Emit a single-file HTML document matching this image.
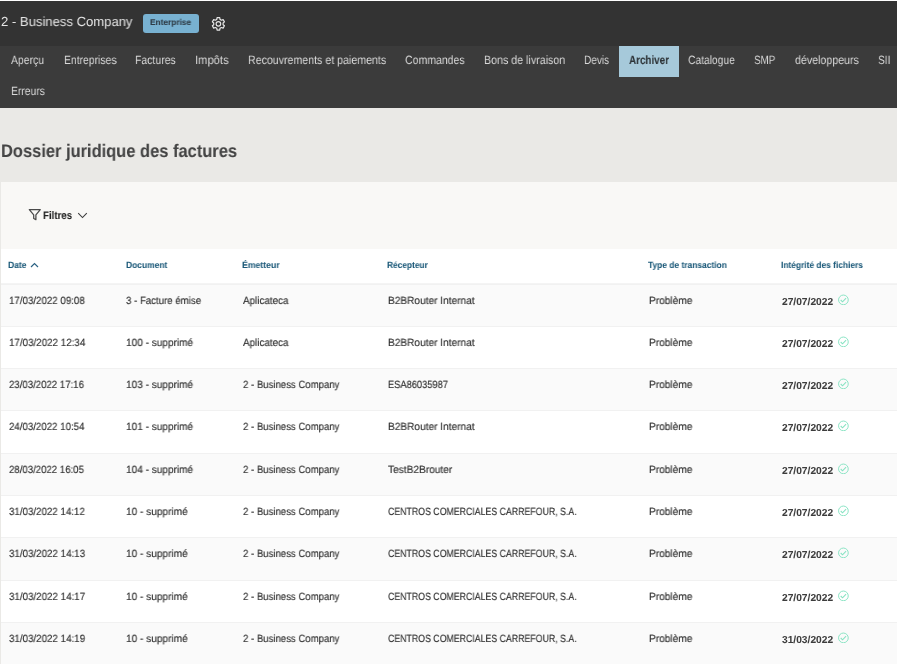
<!DOCTYPE html>
<html><head><meta charset="utf-8"><style>
html,body{margin:0;padding:0;}
body{width:897px;height:664px;position:relative;overflow:hidden;background:#eae9e6;font-family:"Liberation Sans", sans-serif;}
.t{position:absolute;white-space:nowrap;transform-origin:0 0;text-rendering:geometricPrecision;will-change:transform;-webkit-text-stroke:0.16px currentColor;}
.r{position:absolute;left:1px;right:0;}
.ck{position:absolute;}
#top{position:absolute;left:0;top:0;width:897px;height:46px;background:#333333;border-top:1px solid #ffffff;box-sizing:border-box;}
#nav{position:absolute;left:0;top:46px;width:897px;height:62px;background:#3b3b3b;}
#badge{position:absolute;left:143px;top:14px;width:56px;height:19px;background:#78b1d1;border-radius:3px;}
#act{position:absolute;left:619px;top:46px;width:60px;height:31px;background:#a6c9da;}
#ph{position:absolute;left:0;top:108px;width:897px;height:74px;background:#eae9e6;}
#fp{position:absolute;left:1px;top:182px;right:0;height:67px;background:#f9f8f6;}
#th{position:absolute;left:1px;top:249px;right:0;height:34px;background:#ffffff;}
#thb{position:absolute;left:1px;top:283px;right:0;height:1px;background:#efefef;}
</style></head><body>
<div id="top"></div>
<div id="nav"></div>
<div id="badge"></div>
<div id="act"></div>
<div id="ph"></div>
<div id="fp"></div>
<div id="th"></div>

<div class="r" style="top:284px;height:1px;background:#f1f1f1"></div><div class="r" style="top:285px;height:41px;background:#fafafa"></div><div class="r" style="top:326px;height:1px;background:#f1f1f1"></div><div class="r" style="top:327px;height:41px;background:#ffffff"></div><div class="r" style="top:368px;height:1px;background:#f1f1f1"></div><div class="r" style="top:369px;height:41px;background:#fafafa"></div><div class="r" style="top:410px;height:1px;background:#f1f1f1"></div><div class="r" style="top:411px;height:42px;background:#ffffff"></div><div class="r" style="top:453px;height:1px;background:#f1f1f1"></div><div class="r" style="top:454px;height:41px;background:#fafafa"></div><div class="r" style="top:495px;height:1px;background:#f1f1f1"></div><div class="r" style="top:496px;height:41px;background:#ffffff"></div><div class="r" style="top:537px;height:1px;background:#f1f1f1"></div><div class="r" style="top:538px;height:42px;background:#fafafa"></div><div class="r" style="top:580px;height:1px;background:#f1f1f1"></div><div class="r" style="top:581px;height:41px;background:#ffffff"></div><div class="r" style="top:622px;height:1px;background:#f1f1f1"></div><div class="r" style="top:623px;height:41px;background:#fafafa"></div><div class="r" style="top:283px;height:1px;background:#f4f4f4"></div>
<svg style="position:absolute;left:210px;top:16px" width="16" height="16" viewBox="0 0 16 16"><g transform="translate(0.4,-0.15)"><path d="M6.38 3.54 L6.68 1.79 L9.32 1.79 L9.62 3.54 L11.05 4.36 L12.72 3.75 L14.04 6.04 L12.68 7.18 L12.68 8.82 L14.04 9.96 L12.72 12.25 L11.05 11.64 L9.62 12.46 L9.32 14.21 L6.68 14.21 L6.38 12.46 L4.95 11.64 L3.28 12.25 L1.96 9.96 L3.32 8.82 L3.32 7.18 L1.96 6.04 L3.28 3.75 L4.95 4.36Z" fill="none" stroke="#e6e6e6" stroke-width="1.2" stroke-linejoin="round"/><circle cx="8" cy="8" r="2.3" fill="none" stroke="#e6e6e6" stroke-width="1.15"/></g></svg>
<svg style="position:absolute;left:24px;top:204px" width="20" height="20" viewBox="0 0 20 20"><g transform="translate(4.2,4.05) scale(0.55)"><polygon points="22 3 2 3 10 12.46 10 19 14 21 14 12.46 22 3" fill="none" stroke="#4a4a4a" stroke-width="2.3" stroke-linejoin="round" stroke-linecap="round"/></g></svg>
<svg style="position:absolute;left:77px;top:211px" width="11" height="9" viewBox="0 0 11 9"><path d="M1.2 2.2 L5.5 6.5 L9.8 2.2" fill="none" stroke="#3a3a3a" stroke-width="1.05"/></svg>
<svg style="position:absolute;left:30px;top:262px" width="9" height="6" viewBox="0 0 9 6"><path d="M1 5 L4.5 1.5 L8 5" fill="none" stroke="#2b6283" stroke-width="1.2"/></svg>
<svg class="ck" style="left:837px;top:293px" width="13" height="12" viewBox="0 0 13 12"><g transform="translate(6.4,6.90)"><circle cx="0" cy="0" r="4.85" fill="none" stroke="#86e3c2" stroke-width="0.95"/><path d="M-2.7 0.1 L-0.85 1.9 L2.7 -1.8" fill="none" stroke="#86e3c2" stroke-width="1.05"/></g></svg><svg class="ck" style="left:837px;top:335px" width="13" height="12" viewBox="0 0 13 12"><g transform="translate(6.4,6.90)"><circle cx="0" cy="0" r="4.85" fill="none" stroke="#86e3c2" stroke-width="0.95"/><path d="M-2.7 0.1 L-0.85 1.9 L2.7 -1.8" fill="none" stroke="#86e3c2" stroke-width="1.05"/></g></svg><svg class="ck" style="left:837px;top:377px" width="13" height="12" viewBox="0 0 13 12"><g transform="translate(6.4,6.90)"><circle cx="0" cy="0" r="4.85" fill="none" stroke="#86e3c2" stroke-width="0.95"/><path d="M-2.7 0.1 L-0.85 1.9 L2.7 -1.8" fill="none" stroke="#86e3c2" stroke-width="1.05"/></g></svg><svg class="ck" style="left:837px;top:419px" width="13" height="12" viewBox="0 0 13 12"><g transform="translate(6.4,6.90)"><circle cx="0" cy="0" r="4.85" fill="none" stroke="#86e3c2" stroke-width="0.95"/><path d="M-2.7 0.1 L-0.85 1.9 L2.7 -1.8" fill="none" stroke="#86e3c2" stroke-width="1.05"/></g></svg><svg class="ck" style="left:837px;top:462px" width="13" height="12" viewBox="0 0 13 12"><g transform="translate(6.4,6.90)"><circle cx="0" cy="0" r="4.85" fill="none" stroke="#86e3c2" stroke-width="0.95"/><path d="M-2.7 0.1 L-0.85 1.9 L2.7 -1.8" fill="none" stroke="#86e3c2" stroke-width="1.05"/></g></svg><svg class="ck" style="left:837px;top:504px" width="13" height="12" viewBox="0 0 13 12"><g transform="translate(6.4,6.90)"><circle cx="0" cy="0" r="4.85" fill="none" stroke="#86e3c2" stroke-width="0.95"/><path d="M-2.7 0.1 L-0.85 1.9 L2.7 -1.8" fill="none" stroke="#86e3c2" stroke-width="1.05"/></g></svg><svg class="ck" style="left:837px;top:546px" width="13" height="12" viewBox="0 0 13 12"><g transform="translate(6.4,6.90)"><circle cx="0" cy="0" r="4.85" fill="none" stroke="#86e3c2" stroke-width="0.95"/><path d="M-2.7 0.1 L-0.85 1.9 L2.7 -1.8" fill="none" stroke="#86e3c2" stroke-width="1.05"/></g></svg><svg class="ck" style="left:837px;top:589px" width="13" height="12" viewBox="0 0 13 12"><g transform="translate(6.4,6.90)"><circle cx="0" cy="0" r="4.85" fill="none" stroke="#86e3c2" stroke-width="0.95"/><path d="M-2.7 0.1 L-0.85 1.9 L2.7 -1.8" fill="none" stroke="#86e3c2" stroke-width="1.05"/></g></svg><svg class="ck" style="left:837px;top:631px" width="13" height="12" viewBox="0 0 13 12"><g transform="translate(6.4,6.90)"><circle cx="0" cy="0" r="4.85" fill="none" stroke="#86e3c2" stroke-width="0.95"/><path d="M-2.7 0.1 L-0.85 1.9 L2.7 -1.8" fill="none" stroke="#86e3c2" stroke-width="1.05"/></g></svg>
<div class="t" style="left:0.51px;top:15px;font-size:13.23px;line-height:13.23px;font-weight:400;color:#e6e6e6;transform:scaleX(0.9887);-webkit-text-stroke:0">2 - Business Company</div><div class="t" style="left:150.02px;top:18px;font-size:8.43px;line-height:8.43px;font-weight:700;color:#2e3a44;transform:scaleX(0.9847);-webkit-text-stroke:0.06px currentColor">Enterprise</div><div class="t" style="left:11.40px;top:54px;font-size:12.06px;line-height:12.06px;font-weight:400;color:#d8d8d8;transform:scaleX(0.8645);-webkit-text-stroke:0">Aperçu</div><div class="t" style="left:63.80px;top:54px;font-size:12.06px;line-height:12.06px;font-weight:400;color:#d8d8d8;transform:scaleX(0.8620);-webkit-text-stroke:0">Entreprises</div><div class="t" style="left:135.19px;top:54px;font-size:12.06px;line-height:12.06px;font-weight:400;color:#d8d8d8;transform:scaleX(0.8686);-webkit-text-stroke:0">Factures</div><div class="t" style="left:195.39px;top:54px;font-size:12.06px;line-height:12.06px;font-weight:400;color:#d8d8d8;transform:scaleX(0.9295);-webkit-text-stroke:0">Impôts</div><div class="t" style="left:247.97px;top:54px;font-size:12.06px;line-height:12.06px;font-weight:400;color:#d8d8d8;transform:scaleX(0.8818);-webkit-text-stroke:0">Recouvrements et paiements</div><div class="t" style="left:405.20px;top:54px;font-size:12.06px;line-height:12.06px;font-weight:400;color:#d8d8d8;transform:scaleX(0.8733);-webkit-text-stroke:0">Commandes</div><div class="t" style="left:483.67px;top:54px;font-size:12.06px;line-height:12.06px;font-weight:400;color:#d8d8d8;transform:scaleX(0.8853);-webkit-text-stroke:0">Bons de livraison</div><div class="t" style="left:583.61px;top:54px;font-size:12.06px;line-height:12.06px;font-weight:400;color:#d8d8d8;transform:scaleX(0.8356);-webkit-text-stroke:0">Devis</div><div class="t" style="left:687.92px;top:54px;font-size:12.06px;line-height:12.06px;font-weight:400;color:#d8d8d8;transform:scaleX(0.8535);-webkit-text-stroke:0">Catalogue</div><div class="t" style="left:753.86px;top:54px;font-size:12.06px;line-height:12.06px;font-weight:400;color:#d8d8d8;transform:scaleX(0.8174);-webkit-text-stroke:0">SMP</div><div class="t" style="left:795.00px;top:54px;font-size:12.06px;line-height:12.06px;font-weight:400;color:#d8d8d8;transform:scaleX(0.8832);-webkit-text-stroke:0">développeurs</div><div class="t" style="left:877.75px;top:54px;font-size:12.06px;line-height:12.06px;font-weight:400;color:#d8d8d8;transform:scaleX(0.8369);-webkit-text-stroke:0">SII</div><div class="t" style="left:628.80px;top:54px;font-size:12.06px;line-height:12.06px;font-weight:700;color:#2e3438;transform:scaleX(0.8175);-webkit-text-stroke:0.06px currentColor">Archiver</div><div class="t" style="left:10.60px;top:85px;font-size:12.06px;line-height:12.06px;font-weight:400;color:#d8d8d8;transform:scaleX(0.8573);-webkit-text-stroke:0">Erreurs</div><div class="t" style="left:1.07px;top:142px;font-size:18.17px;line-height:18.17px;font-weight:700;color:#444;transform:scaleX(0.9066);-webkit-text-stroke:0.06px currentColor">Dossier juridique des factures</div><div class="t" style="left:42.84px;top:211px;font-size:11.05px;line-height:11.05px;font-weight:700;color:#222;transform:scaleX(0.8785);-webkit-text-stroke:0.06px currentColor">Filtres</div><div class="t" style="left:7.79px;top:261px;font-size:9.01px;line-height:9.01px;font-weight:700;color:#1a5878;transform:scaleX(0.9474);-webkit-text-stroke:0.06px currentColor">Date</div><div class="t" style="left:126.19px;top:261px;font-size:9.01px;line-height:9.01px;font-weight:700;color:#1a5878;transform:scaleX(0.9388);-webkit-text-stroke:0.06px currentColor">Document</div><div class="t" style="left:241.89px;top:261px;font-size:9.01px;line-height:9.01px;font-weight:700;color:#1a5878;transform:scaleX(0.9642);-webkit-text-stroke:0.06px currentColor">Émetteur</div><div class="t" style="left:386.90px;top:261px;font-size:9.01px;line-height:9.01px;font-weight:700;color:#1a5878;transform:scaleX(0.9278);-webkit-text-stroke:0.06px currentColor">Récepteur</div><div class="t" style="left:648.10px;top:261px;font-size:9.01px;line-height:9.01px;font-weight:700;color:#1a5878;transform:scaleX(0.9357);-webkit-text-stroke:0.06px currentColor">Type de transaction</div><div class="t" style="left:780.69px;top:261px;font-size:9.01px;line-height:9.01px;font-weight:700;color:#1a5878;transform:scaleX(0.9312);-webkit-text-stroke:0.06px currentColor">Intégrité des fichiers</div><div class="t" style="left:8.50px;top:297px;font-size:10.47px;line-height:10.47px;font-weight:400;color:#333333;transform:scaleX(0.9293)">17/03/2022 09:08</div><div class="t" style="left:126.19px;top:297px;font-size:10.47px;line-height:10.47px;font-weight:400;color:#333333;transform:scaleX(0.9210)">3 - Facture émise</div><div class="t" style="left:243.40px;top:297px;font-size:10.47px;line-height:10.47px;font-weight:400;color:#333333;transform:scaleX(0.9416)">Aplicateca</div><div class="t" style="left:387.51px;top:297px;font-size:10.47px;line-height:10.47px;font-weight:400;color:#333333;transform:scaleX(0.9663)">B2BRouter Internat</div><div class="t" style="left:648.81px;top:297px;font-size:10.47px;line-height:10.47px;font-weight:400;color:#333333;transform:scaleX(0.9685)">Problème</div><div class="t" style="left:782.00px;top:298px;font-size:10.17px;line-height:10.17px;font-weight:700;color:#3c3c3c;transform:scaleX(1.0054);-webkit-text-stroke:0.06px currentColor">27/07/2022</div><div class="t" style="left:8.50px;top:339px;font-size:10.47px;line-height:10.47px;font-weight:400;color:#333333;transform:scaleX(0.9358)">17/03/2022 12:34</div><div class="t" style="left:125.97px;top:339px;font-size:10.47px;line-height:10.47px;font-weight:400;color:#333333;transform:scaleX(0.9602)">100 - supprimé</div><div class="t" style="left:243.40px;top:339px;font-size:10.47px;line-height:10.47px;font-weight:400;color:#333333;transform:scaleX(0.9416)">Aplicateca</div><div class="t" style="left:387.51px;top:339px;font-size:10.47px;line-height:10.47px;font-weight:400;color:#333333;transform:scaleX(0.9663)">B2BRouter Internat</div><div class="t" style="left:648.81px;top:339px;font-size:10.47px;line-height:10.47px;font-weight:400;color:#333333;transform:scaleX(0.9685)">Problème</div><div class="t" style="left:782.00px;top:340px;font-size:10.17px;line-height:10.17px;font-weight:700;color:#3c3c3c;transform:scaleX(1.0054);-webkit-text-stroke:0.06px currentColor">27/07/2022</div><div class="t" style="left:9.30px;top:381px;font-size:10.47px;line-height:10.47px;font-weight:400;color:#333333;transform:scaleX(0.9192)">23/03/2022 17:16</div><div class="t" style="left:125.97px;top:381px;font-size:10.47px;line-height:10.47px;font-weight:400;color:#333333;transform:scaleX(0.9602)">103 - supprimé</div><div class="t" style="left:243.40px;top:381px;font-size:10.47px;line-height:10.47px;font-weight:400;color:#333333;transform:scaleX(0.9156)">2 - Business Company</div><div class="t" style="left:387.54px;top:381px;font-size:10.47px;line-height:10.47px;font-weight:400;color:#333333;transform:scaleX(0.8875)">ESA86035987</div><div class="t" style="left:648.81px;top:381px;font-size:10.47px;line-height:10.47px;font-weight:400;color:#333333;transform:scaleX(0.9685)">Problème</div><div class="t" style="left:782.00px;top:382px;font-size:10.17px;line-height:10.17px;font-weight:700;color:#3c3c3c;transform:scaleX(1.0054);-webkit-text-stroke:0.06px currentColor">27/07/2022</div><div class="t" style="left:9.30px;top:423px;font-size:10.47px;line-height:10.47px;font-weight:400;color:#333333;transform:scaleX(0.9256)">24/03/2022 10:54</div><div class="t" style="left:125.97px;top:423px;font-size:10.47px;line-height:10.47px;font-weight:400;color:#333333;transform:scaleX(0.9602)">101 - supprimé</div><div class="t" style="left:243.40px;top:423px;font-size:10.47px;line-height:10.47px;font-weight:400;color:#333333;transform:scaleX(0.9156)">2 - Business Company</div><div class="t" style="left:387.51px;top:423px;font-size:10.47px;line-height:10.47px;font-weight:400;color:#333333;transform:scaleX(0.9663)">B2BRouter Internat</div><div class="t" style="left:648.81px;top:423px;font-size:10.47px;line-height:10.47px;font-weight:400;color:#333333;transform:scaleX(0.9685)">Problème</div><div class="t" style="left:782.00px;top:424px;font-size:10.17px;line-height:10.17px;font-weight:700;color:#3c3c3c;transform:scaleX(1.0054);-webkit-text-stroke:0.06px currentColor">27/07/2022</div><div class="t" style="left:9.30px;top:466px;font-size:10.47px;line-height:10.47px;font-weight:400;color:#333333;transform:scaleX(0.9189)">28/03/2022 16:05</div><div class="t" style="left:125.97px;top:466px;font-size:10.47px;line-height:10.47px;font-weight:400;color:#333333;transform:scaleX(0.9602)">104 - supprimé</div><div class="t" style="left:243.40px;top:466px;font-size:10.47px;line-height:10.47px;font-weight:400;color:#333333;transform:scaleX(0.9156)">2 - Business Company</div><div class="t" style="left:387.64px;top:466px;font-size:10.47px;line-height:10.47px;font-weight:400;color:#333333;transform:scaleX(0.9696)">TestB2Brouter</div><div class="t" style="left:648.81px;top:466px;font-size:10.47px;line-height:10.47px;font-weight:400;color:#333333;transform:scaleX(0.9685)">Problème</div><div class="t" style="left:782.00px;top:467px;font-size:10.17px;line-height:10.17px;font-weight:700;color:#3c3c3c;transform:scaleX(1.0054);-webkit-text-stroke:0.06px currentColor">27/07/2022</div><div class="t" style="left:8.69px;top:508px;font-size:10.47px;line-height:10.47px;font-weight:400;color:#333333;transform:scaleX(0.9303)">31/03/2022 14:12</div><div class="t" style="left:125.97px;top:508px;font-size:10.47px;line-height:10.47px;font-weight:400;color:#333333;transform:scaleX(0.9632)">10 - supprimé</div><div class="t" style="left:243.40px;top:508px;font-size:10.47px;line-height:10.47px;font-weight:400;color:#333333;transform:scaleX(0.9156)">2 - Business Company</div><div class="t" style="left:388.30px;top:508px;font-size:10.47px;line-height:10.47px;font-weight:400;color:#333333;transform:scaleX(0.8381)">CENTROS COMERCIALES CARREFOUR, S.A.</div><div class="t" style="left:648.81px;top:508px;font-size:10.47px;line-height:10.47px;font-weight:400;color:#333333;transform:scaleX(0.9685)">Problème</div><div class="t" style="left:782.00px;top:509px;font-size:10.17px;line-height:10.17px;font-weight:700;color:#3c3c3c;transform:scaleX(1.0054);-webkit-text-stroke:0.06px currentColor">27/07/2022</div><div class="t" style="left:8.69px;top:550px;font-size:10.47px;line-height:10.47px;font-weight:400;color:#333333;transform:scaleX(0.9335)">31/03/2022 14:13</div><div class="t" style="left:125.97px;top:550px;font-size:10.47px;line-height:10.47px;font-weight:400;color:#333333;transform:scaleX(0.9632)">10 - supprimé</div><div class="t" style="left:243.40px;top:550px;font-size:10.47px;line-height:10.47px;font-weight:400;color:#333333;transform:scaleX(0.9156)">2 - Business Company</div><div class="t" style="left:388.30px;top:550px;font-size:10.47px;line-height:10.47px;font-weight:400;color:#333333;transform:scaleX(0.8381)">CENTROS COMERCIALES CARREFOUR, S.A.</div><div class="t" style="left:648.81px;top:550px;font-size:10.47px;line-height:10.47px;font-weight:400;color:#333333;transform:scaleX(0.9685)">Problème</div><div class="t" style="left:782.00px;top:551px;font-size:10.17px;line-height:10.17px;font-weight:700;color:#3c3c3c;transform:scaleX(1.0054);-webkit-text-stroke:0.06px currentColor">27/07/2022</div><div class="t" style="left:8.69px;top:593px;font-size:10.47px;line-height:10.47px;font-weight:400;color:#333333;transform:scaleX(0.9340)">31/03/2022 14:17</div><div class="t" style="left:125.97px;top:593px;font-size:10.47px;line-height:10.47px;font-weight:400;color:#333333;transform:scaleX(0.9632)">10 - supprimé</div><div class="t" style="left:243.40px;top:593px;font-size:10.47px;line-height:10.47px;font-weight:400;color:#333333;transform:scaleX(0.9156)">2 - Business Company</div><div class="t" style="left:388.30px;top:593px;font-size:10.47px;line-height:10.47px;font-weight:400;color:#333333;transform:scaleX(0.8381)">CENTROS COMERCIALES CARREFOUR, S.A.</div><div class="t" style="left:648.81px;top:593px;font-size:10.47px;line-height:10.47px;font-weight:400;color:#333333;transform:scaleX(0.9685)">Problème</div><div class="t" style="left:782.00px;top:594px;font-size:10.17px;line-height:10.17px;font-weight:700;color:#3c3c3c;transform:scaleX(1.0054);-webkit-text-stroke:0.06px currentColor">27/07/2022</div><div class="t" style="left:8.69px;top:635px;font-size:10.47px;line-height:10.47px;font-weight:400;color:#333333;transform:scaleX(0.9335)">31/03/2022 14:19</div><div class="t" style="left:125.97px;top:635px;font-size:10.47px;line-height:10.47px;font-weight:400;color:#333333;transform:scaleX(0.9632)">10 - supprimé</div><div class="t" style="left:243.40px;top:635px;font-size:10.47px;line-height:10.47px;font-weight:400;color:#333333;transform:scaleX(0.9156)">2 - Business Company</div><div class="t" style="left:388.30px;top:635px;font-size:10.47px;line-height:10.47px;font-weight:400;color:#333333;transform:scaleX(0.8381)">CENTROS COMERCIALES CARREFOUR, S.A.</div><div class="t" style="left:648.81px;top:635px;font-size:10.47px;line-height:10.47px;font-weight:400;color:#333333;transform:scaleX(0.9685)">Problème</div><div class="t" style="left:782.00px;top:636px;font-size:10.17px;line-height:10.17px;font-weight:700;color:#3c3c3c;transform:scaleX(1.0054);-webkit-text-stroke:0.06px currentColor">31/03/2022</div>
</body></html>
